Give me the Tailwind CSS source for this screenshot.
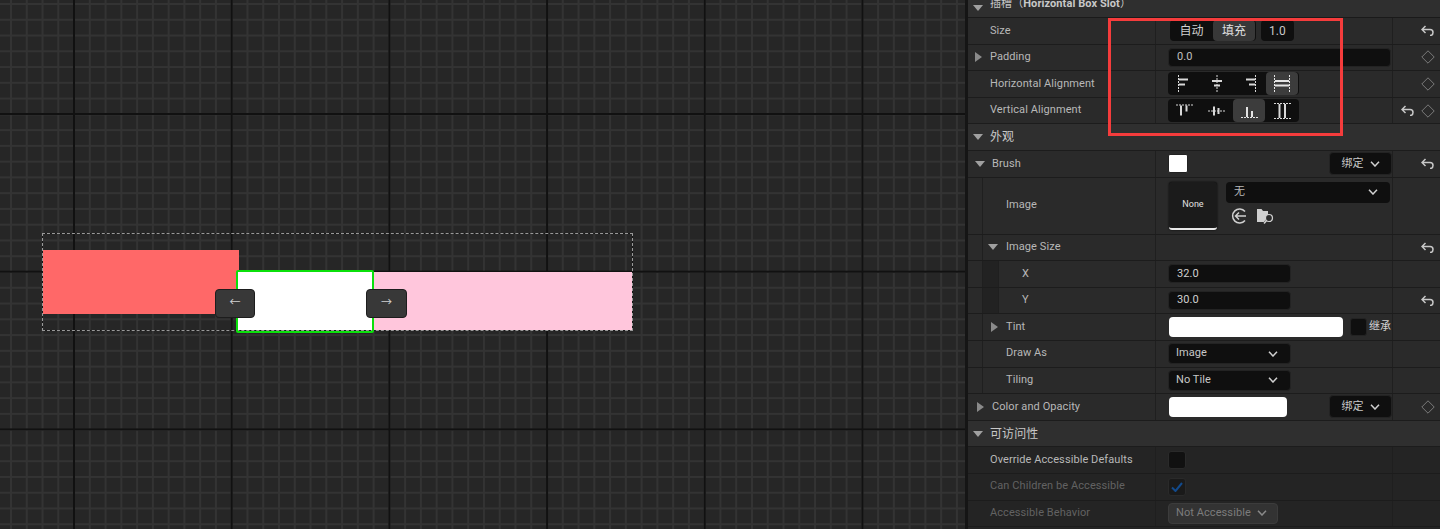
<!doctype html>
<html><head><meta charset="utf-8"><script src="https://cdn.jsdelivr.net/npm/@tailwindcss/browser@4"></script></head>
<body class="m-0 overflow-hidden bg-[#151515]">
<div class="relative flex h-[529px] w-[1440px] overflow-hidden font-['Roboto','Noto_Sans_CJK_SC',sans-serif] text-[11px] tracking-[0.08px] text-[#b8b8b8]">
  <!-- canvas -->
  <div class="relative h-full w-[965px] shrink-0 bg-[#262626] bg-[linear-gradient(to_right,#111_2px,transparent_2px),linear-gradient(to_bottom,#111_2px,transparent_2px),linear-gradient(to_right,#333_2px,transparent_2px),linear-gradient(to_bottom,#333_2px,transparent_2px)] bg-[size:157.7px_157.7px,157.7px_157.7px,15.77px_15.77px,15.77px_15.77px] bg-[position:73px_0,0_113px,10px_0,0_3px]">
    <div class="absolute left-[43px] top-[250px] h-[64px] w-[196px] bg-[#ff6868]"></div>
    <div class="absolute left-[373px] top-[272px] h-[59px] w-[260px] bg-[#ffc6dc]"></div>
    <div class="absolute left-[238px] top-[271px] h-[61px] w-[135px] bg-white"></div>
    <div class="absolute left-[42px] top-[233px] h-[98px] w-[591px] border border-[#161616]"></div>
    <div class="absolute left-[42px] top-[233px] h-[98px] w-[591px] border border-dashed border-[#999]"></div>
    <div class="absolute left-[236px] top-[270px] h-[63px] w-[138px] rounded-[2px] border-2 border-[#0be00b]"></div>
    <div class="absolute left-[215px] top-[289px] flex h-[29px] w-[40px] items-center justify-center rounded-[4px] border border-[#1d1d1d] bg-[#383838] text-[11px] text-[#d0d0d0]">←</div>
    <div class="absolute left-[366px] top-[289px] flex h-[29px] w-[41px] items-center justify-center rounded-[4px] border border-[#1d1d1d] bg-[#383838] text-[11px] text-[#d0d0d0]">→</div>
  </div>
  <!-- splitter -->
  <div class="h-full w-[3px] shrink-0 bg-[#151515]"></div>
  <!-- panel -->
  <div class="flex h-full min-w-0 flex-1 flex-col bg-[#242424]">
    <div class="flex h-[18px] shrink-0 items-end border-b border-[#1a1a1a] bg-[#2f2f2f] pb-[5px] pl-[5px]">
      <svg class="mr-[7px] mb-[1px] h-[6px] w-[10px] fill-[#a0a0a0]" viewBox="0 0 10 6"><path d="M0 0H10L5 6Z"/></svg>
      <span class="text-[#c8c8c8]">插槽（<b class="font-bold">Horizontal Box Slot</b>）</span>
    </div>

    <!-- Size -->
    <div class="flex h-[26.6px] shrink-0 border-b border-[#1c1c1c] bg-[#2a2a2a]">
      <div class="flex w-[188px] shrink-0 items-center border-r border-[#1f1f1f] pl-[22px]">Size</div>
      <div class="flex w-[237px] shrink-0 items-center gap-[5px] border-r border-[#1f1f1f] pl-[14px]">
        <div class="flex h-[21px] w-[86px] items-center rounded-[4px] bg-[#0f0f0f] text-[12px] text-[#d0d0d0]"><span class="w-[43px] text-center">自动</span><span class="flex h-full w-[42px] items-center justify-center rounded-[4px] bg-[#383838] text-[#e0e0e0]">填充</span></div>
        <div class="flex h-[21px] w-[33px] items-center justify-center rounded-[4px] bg-[#0f0f0f] text-[12px] text-[#c8c8c8]">1.0</div>
      </div>
      <div class="flex flex-1 items-center justify-end pr-[6px]"><svg class="h-[11px] w-[13px] fill-none stroke-[#c8c8c8] stroke-[1.5]" viewBox="0 0 13 11"><path d="M4.500 1 1 4.500l3.500 3.500M1 4.500h8a3 3 0 0 1 0 6"/></svg></div>
    </div>
    <!-- Padding -->
    <div class="flex h-[26.6px] shrink-0 border-b border-[#1c1c1c] bg-[#2a2a2a]">
      <div class="flex w-[188px] shrink-0 items-center border-r border-[#1f1f1f] pl-[7px]"><svg class="mr-[8px] h-[10px] w-[7px] fill-[#8a8a8a]" viewBox="0 0 7 10"><path d="M0 0 7 5 0 10Z"/></svg>Padding</div>
      <div class="flex w-[237px] shrink-0 items-center border-r border-[#1f1f1f] pl-[12px]">
        <div class="flex h-[19px] w-[223px] items-center rounded-[4px] border border-[#232323] bg-[#0f0f0f] pl-[8px] text-[#c0c0c0]">0.0</div>
      </div>
      <div class="flex flex-1 items-center justify-end pr-[5px]"><svg class="h-[14px] w-[14px] fill-none stroke-[#7a7a7a]" viewBox="0 0 14 14"><path d="M7 .8 13.200 7 7 13.200.8 7Z"/></svg></div>
    </div>
    <!-- H align -->
    <div class="flex h-[26.6px] shrink-0 border-b border-[#1c1c1c] bg-[#2a2a2a]">
      <div class="flex w-[188px] shrink-0 items-center border-r border-[#1f1f1f] pl-[22px]">Horizontal Alignment</div>
      <div class="flex w-[237px] shrink-0 items-center border-r border-[#1f1f1f] pl-[12px]">
        <div class="flex h-[23px] w-[131px] items-center rounded-[4px] bg-[#0f0f0f]">
          <span class="flex h-full w-[32px] items-center justify-center"><svg class="h-[17px] w-[16px] fill-none stroke-[#d8d8d8]" viewBox="0 0 16 17"><path d="M2.500 0v17" stroke-dasharray="2 1"/><path d="M3 4.500h9M3 9.500h6" stroke-width="2"/></svg></span>
          <span class="flex h-full w-[33px] items-center justify-center"><svg class="h-[17px] w-[16px] fill-none stroke-[#d8d8d8]" viewBox="0 0 16 17"><path d="M8 0v17" stroke-dasharray="2 1"/><path d="M3 6h10M5 10.500h6" stroke-width="2"/></svg></span>
          <span class="flex h-full w-[33px] items-center justify-center"><svg class="h-[17px] w-[16px] fill-none stroke-[#d8d8d8]" viewBox="0 0 16 17"><path d="M13.500 0v17" stroke-dasharray="2 1"/><path d="M4 4.500h9M7 9.500h6" stroke-width="2"/></svg></span>
          <span class="flex h-full w-[32px] items-center justify-center rounded-[4px] bg-[#3c3c3c]"><svg class="h-[17px] w-[18px] fill-none stroke-[#e4e4e4]" viewBox="0 0 18 17"><path d="M1.500 0v17M16.500 0v17" stroke-dasharray="2 1"/><path d="M2 6h14M2 10.500h14" stroke-width="2"/></svg></span>
        </div>
      </div>
      <div class="flex flex-1 items-center justify-end pr-[5px]"><svg class="h-[14px] w-[14px] fill-none stroke-[#7a7a7a]" viewBox="0 0 14 14"><path d="M7 .8 13.200 7 7 13.200.8 7Z"/></svg></div>
    </div>
    <!-- V align -->
    <div class="flex h-[26.6px] shrink-0 border-b border-[#1c1c1c] bg-[#2a2a2a]">
      <div class="flex w-[188px] shrink-0 items-center border-r border-[#1f1f1f] pl-[22px]">Vertical Alignment</div>
      <div class="flex w-[237px] shrink-0 items-center border-r border-[#1f1f1f] pl-[12px]">
        <div class="flex h-[23px] w-[131px] items-center rounded-[4px] bg-[#0f0f0f]">
          <span class="flex h-full w-[32px] items-center justify-center"><svg class="h-[16px] w-[17px] fill-none stroke-[#d8d8d8]" viewBox="0 0 17 16"><path d="M0 2h17" stroke-dasharray="2 1"/><path d="M5 2.500v10M10.500 2.500v6" stroke-width="2"/></svg></span>
          <span class="flex h-full w-[33px] items-center justify-center"><svg class="h-[16px] w-[17px] fill-none stroke-[#d8d8d8]" viewBox="0 0 17 16"><path d="M0 8h17" stroke-dasharray="2 1"/><path d="M6 3.500v9M10.500 5v6" stroke-width="2"/></svg></span>
          <span class="flex h-full w-[32px] items-center justify-center rounded-[4px] bg-[#3c3c3c]"><svg class="h-[16px] w-[17px] fill-none stroke-[#e4e4e4]" viewBox="0 0 17 16"><path d="M0 14.500h17" stroke-dasharray="2 1"/><path d="M6 4v10M11 8v6" stroke-width="2"/></svg></span>
          <span class="flex h-full w-[34px] items-center justify-center"><svg class="h-[18px] w-[17px] fill-none stroke-[#d8d8d8]" viewBox="0 0 17 18"><path d="M0 1.500h17M0 16.500h17" stroke-dasharray="2 1"/><path d="M5.500 2v14M11 2v14" stroke-width="2"/></svg></span>
        </div>
      </div>
      <div class="flex flex-1 items-center justify-end gap-[7px] pr-[5px]"><svg class="h-[11px] w-[13px] fill-none stroke-[#c8c8c8] stroke-[1.5]" viewBox="0 0 13 11"><path d="M4.500 1 1 4.500l3.500 3.500M1 4.500h8a3 3 0 0 1 0 6"/></svg><svg class="h-[14px] w-[14px] fill-none stroke-[#7a7a7a]" viewBox="0 0 14 14"><path d="M7 .8 13.200 7 7 13.200.8 7Z"/></svg></div>
    </div>
    <!-- 外观 -->
    <div class="flex h-[26.6px] shrink-0 items-center border-b border-[#1c1c1c] bg-[#2f2f2f] pl-[5px] text-[12px] text-[#c8c8c8]"><svg class="mr-[7px] h-[6px] w-[10px] fill-[#a0a0a0]" viewBox="0 0 10 6"><path d="M0 0H10L5 6Z"/></svg>外观</div>
    <!-- Brush -->
    <div class="flex h-[26.6px] shrink-0 border-b border-[#1c1c1c] bg-[#2a2a2a]">
      <div class="flex w-[188px] shrink-0 items-center border-r border-[#1f1f1f] pl-[7px]"><svg class="mr-[7px] h-[6px] w-[10px] fill-[#a0a0a0]" viewBox="0 0 10 6"><path d="M0 0H10L5 6Z"/></svg>Brush</div>
      <div class="flex w-[237px] shrink-0 items-center justify-between border-r border-[#1f1f1f] pl-[12px]">
        <div class="h-[19px] w-[20px] rounded-[2px] border border-[#222] bg-white"></div>
        <div class="flex h-[23px] w-[63px] items-center justify-center gap-[6px] rounded-[4px] border border-[#232323] bg-[#0f0f0f] text-[#c8c8c8]">绑定<svg class="h-[6px] w-[10px] fill-none stroke-[#d0d0d0] stroke-[1.5]" viewBox="0 0 10 6"><path d="M1 .8 5 5 9 .8"/></svg></div>
      </div>
      <div class="flex flex-1 items-center justify-end pr-[6px]"><svg class="h-[11px] w-[13px] fill-none stroke-[#c8c8c8] stroke-[1.5]" viewBox="0 0 13 11"><path d="M4.500 1 1 4.500l3.500 3.500M1 4.500h8a3 3 0 0 1 0 6"/></svg></div>
    </div>
    <!-- Image -->
    <div class="flex h-[57px] shrink-0 border-b border-[#1c1c1c] bg-[#2a2a2a]">
      <div class="w-[15px] shrink-0 border-r border-[#1f1f1f]"></div>
      <div class="flex w-[173px] shrink-0 items-center border-r border-[#1f1f1f] pl-[23px]">Image</div>
      <div class="flex w-[237px] shrink-0 items-start border-r border-[#1f1f1f] pl-[13px] pt-[4px]">
        <div class="flex h-[48px] w-[48px] shrink-0 items-center justify-center rounded-[3px] border-b-2 border-[#e8e8e8] bg-[#1b1b1b] text-[9px] tracking-normal text-[#e0e0e0] shadow-[0_0_2px_#000]">None</div>
        <div class="ml-[9px] flex w-[164px] flex-col">
          <div class="flex h-[21px] items-center justify-between rounded-[4px] bg-[#0f0f0f] pl-[8px] pr-[12px]">无<svg class="h-[6px] w-[10px] fill-none stroke-[#d0d0d0] stroke-[1.5]" viewBox="0 0 10 6"><path d="M1 .8 5 5 9 .8"/></svg></div>
          <div class="mt-[5px] flex items-center gap-[10px] pl-[5px]">
            <svg class="h-[16px] w-[16px] fill-none stroke-[#d0d0d0] stroke-[1.5]" viewBox="0 0 16 16"><path d="M14 12.500A7 7 0 1 1 14 3.500M15 8H5M8 4.500 4.500 8 8 11.500"/></svg>
            <svg class="h-[17px] w-[17px]" viewBox="0 0 17 17"><path d="M0 1h4.500l1.500 2H11v4H9v4l-2 3H0Z" fill="#cfcfcf"/><circle cx="12" cy="10" r="3.500" fill="#2a2a2a" stroke="#cfcfcf" stroke-width="1.200"/><path d="M9.500 12.500 7 15.500" stroke="#cfcfcf" stroke-width="1.500"/></svg>
          </div>
        </div>
      </div>
    </div>
    <!-- Image Size -->
    <div class="flex h-[26.6px] shrink-0 border-b border-[#1c1c1c] bg-[#2a2a2a]">
      <div class="w-[15px] shrink-0 border-r border-[#1f1f1f]"></div>
      <div class="flex w-[173px] shrink-0 items-center border-r border-[#1f1f1f] pl-[5px]"><svg class="mr-[8px] h-[6px] w-[10px] fill-[#a0a0a0]" viewBox="0 0 10 6"><path d="M0 0H10L5 6Z"/></svg>Image Size</div>
      <div class="w-[237px] shrink-0 border-r border-[#1f1f1f]"></div>
      <div class="flex flex-1 items-center justify-end pr-[6px]"><svg class="h-[11px] w-[13px] fill-none stroke-[#c8c8c8] stroke-[1.5]" viewBox="0 0 13 11"><path d="M4.500 1 1 4.500l3.500 3.500M1 4.500h8a3 3 0 0 1 0 6"/></svg></div>
    </div>
    <!-- X -->
    <div class="flex h-[26.6px] shrink-0 border-b border-[#1c1c1c] bg-[#2a2a2a]">
      <div class="w-[15px] shrink-0 border-r border-[#1f1f1f]"></div>
      <div class="w-[16px] shrink-0 border-r border-[#1f1f1f] bg-[#222]"></div>
      <div class="flex w-[157px] shrink-0 items-center border-r border-[#1f1f1f] pl-[23px]">X</div>
      <div class="flex w-[237px] shrink-0 items-center border-r border-[#1f1f1f] pl-[12px]"><div class="flex h-[19px] w-[123px] items-center rounded-[4px] border border-[#232323] bg-[#0f0f0f] pl-[8px] text-[#d0d0d0]">32.0</div></div>
    </div>
    <!-- Y -->
    <div class="flex h-[26.6px] shrink-0 border-b border-[#1c1c1c] bg-[#2a2a2a]">
      <div class="w-[15px] shrink-0 border-r border-[#1f1f1f]"></div>
      <div class="w-[16px] shrink-0 border-r border-[#1f1f1f] bg-[#222]"></div>
      <div class="flex w-[157px] shrink-0 items-center border-r border-[#1f1f1f] pl-[23px]">Y</div>
      <div class="flex w-[237px] shrink-0 items-center border-r border-[#1f1f1f] pl-[12px]"><div class="flex h-[19px] w-[123px] items-center rounded-[4px] border border-[#232323] bg-[#0f0f0f] pl-[8px] text-[#d0d0d0]">30.0</div></div>
      <div class="flex flex-1 items-center justify-end pr-[6px]"><svg class="h-[11px] w-[13px] fill-none stroke-[#c8c8c8] stroke-[1.5]" viewBox="0 0 13 11"><path d="M4.500 1 1 4.500l3.500 3.500M1 4.500h8a3 3 0 0 1 0 6"/></svg></div>
    </div>
    <!-- Tint -->
    <div class="flex h-[26.6px] shrink-0 border-b border-[#1c1c1c] bg-[#2a2a2a]">
      <div class="w-[15px] shrink-0 border-r border-[#1f1f1f]"></div>
      <div class="flex w-[173px] shrink-0 items-center border-r border-[#1f1f1f] pl-[8px]"><svg class="mr-[8px] h-[10px] w-[7px] fill-[#8a8a8a]" viewBox="0 0 7 10"><path d="M0 0 7 5 0 10Z"/></svg>Tint</div>
      <div class="flex w-[237px] shrink-0 items-center border-r border-[#1f1f1f] pl-[13px]">
        <div class="h-[20px] w-[174px] shrink-0 rounded-[4px] bg-white"></div>
        <div class="ml-[7px] h-[18px] w-[17px] shrink-0 rounded-[3px] border border-[#232323] bg-[#0f0f0f]"></div>
        <span class="ml-[2px] whitespace-nowrap text-[#d0d0d0]">继承</span>
      </div>
    </div>
    <!-- Draw As -->
    <div class="flex h-[26.6px] shrink-0 border-b border-[#1c1c1c] bg-[#2a2a2a]">
      <div class="w-[15px] shrink-0 border-r border-[#1f1f1f]"></div>
      <div class="flex w-[173px] shrink-0 items-center border-r border-[#1f1f1f] pl-[23px]">Draw As</div>
      <div class="flex w-[237px] shrink-0 items-center border-r border-[#1f1f1f] pl-[12px]"><div class="flex h-[21px] w-[123px] items-center justify-between rounded-[4px] border border-[#232323] bg-[#0f0f0f] pl-[7px] pr-[12px] text-[#c8c8c8]">Image<svg class="h-[6px] w-[10px] fill-none stroke-[#d0d0d0] stroke-[1.5]" viewBox="0 0 10 6"><path d="M1 .8 5 5 9 .8"/></svg></div></div>
    </div>
    <!-- Tiling -->
    <div class="flex h-[26.6px] shrink-0 border-b border-[#1c1c1c] bg-[#2a2a2a]">
      <div class="w-[15px] shrink-0 border-r border-[#1f1f1f]"></div>
      <div class="flex w-[173px] shrink-0 items-center border-r border-[#1f1f1f] pl-[23px]">Tiling</div>
      <div class="flex w-[237px] shrink-0 items-center border-r border-[#1f1f1f] pl-[12px]"><div class="flex h-[21px] w-[123px] items-center justify-between rounded-[4px] border border-[#232323] bg-[#0f0f0f] pl-[7px] pr-[12px] text-[#c8c8c8]">No Tile<svg class="h-[6px] w-[10px] fill-none stroke-[#d0d0d0] stroke-[1.5]" viewBox="0 0 10 6"><path d="M1 .8 5 5 9 .8"/></svg></div></div>
    </div>
    <!-- Color and Opacity -->
    <div class="flex h-[26.6px] shrink-0 border-b border-[#1c1c1c] bg-[#2a2a2a]">
      <div class="flex w-[188px] shrink-0 items-center border-r border-[#1f1f1f] pl-[9px]"><svg class="mr-[8px] h-[10px] w-[7px] fill-[#8a8a8a]" viewBox="0 0 7 10"><path d="M0 0 7 5 0 10Z"/></svg>Color and Opacity</div>
      <div class="flex w-[237px] shrink-0 items-center justify-between border-r border-[#1f1f1f] pl-[13px]">
        <div class="h-[20px] w-[118px] rounded-[4px] bg-white"></div>
        <div class="flex h-[23px] w-[63px] items-center justify-center gap-[6px] rounded-[4px] border border-[#232323] bg-[#0f0f0f] text-[#c8c8c8]">绑定<svg class="h-[6px] w-[10px] fill-none stroke-[#d0d0d0] stroke-[1.5]" viewBox="0 0 10 6"><path d="M1 .8 5 5 9 .8"/></svg></div>
      </div>
      <div class="flex flex-1 items-center justify-end pr-[5px]"><svg class="h-[14px] w-[14px] fill-none stroke-[#7a7a7a]" viewBox="0 0 14 14"><path d="M7 .8 13.200 7 7 13.200.8 7Z"/></svg></div>
    </div>
    <!-- 可访问性 -->
    <div class="flex h-[26.6px] shrink-0 items-center border-b border-[#1c1c1c] bg-[#2f2f2f] pl-[5px] text-[12px] text-[#c8c8c8]"><svg class="mr-[7px] h-[6px] w-[10px] fill-[#a0a0a0]" viewBox="0 0 10 6"><path d="M0 0H10L5 6Z"/></svg>可访问性</div>
    <!-- Override -->
    <div class="flex h-[26.6px] shrink-0 border-b border-[#1c1c1c] bg-[#242424]">
      <div class="flex w-[188px] shrink-0 items-center border-r border-[#1f1f1f] pl-[22px]">Override Accessible Defaults</div>
      <div class="flex w-[237px] shrink-0 items-center border-r border-[#1f1f1f] pl-[12px]"><div class="h-[18px] w-[18px] rounded-[3px] border border-[#2a2a2a] bg-[#111]"></div></div>
    </div>
    <!-- Can Children -->
    <div class="flex h-[26.6px] shrink-0 border-b border-[#1c1c1c] bg-[#242424] text-[#626262]">
      <div class="flex w-[188px] shrink-0 items-center border-r border-[#1f1f1f] pl-[22px]">Can Children be Accessible</div>
      <div class="flex w-[237px] shrink-0 items-center border-r border-[#1f1f1f] pl-[12px]"><div class="flex h-[18px] w-[18px] items-center justify-center rounded-[3px] border border-[#2a2a2a] bg-[#1a1a1a]"><svg class="h-[10px] w-[12px] fill-none stroke-[#124a8c] stroke-2" viewBox="0 0 12 10"><path d="M1 5.500 4.500 9 11 1"/></svg></div></div>
    </div>
    <!-- Behavior -->
    <div class="flex h-[26.6px] shrink-0 border-b border-[#1c1c1c] bg-[#242424] text-[#626262]">
      <div class="flex w-[188px] shrink-0 items-center border-r border-[#1f1f1f] pl-[22px]">Accessible Behavior</div>
      <div class="flex w-[237px] shrink-0 items-center border-r border-[#1f1f1f] pl-[12px]"><div class="flex h-[21px] w-[110px] items-center gap-[6px] rounded-[4px] border border-[#3c3c3c] bg-[#333] pl-[7px] text-[#7c7c7c]">Not Accessible<svg class="h-[6px] w-[10px] fill-none stroke-[#8a8a8a] stroke-[1.5]" viewBox="0 0 10 6"><path d="M1 .8 5 5 9 .8"/></svg></div></div>
    </div>
  </div>
  <!-- red annotation -->
  <div class="absolute left-[1108px] top-[18px] h-[118px] w-[235px] border-[3px] border-[#f53c3c]"></div>
</div>
</body></html>
